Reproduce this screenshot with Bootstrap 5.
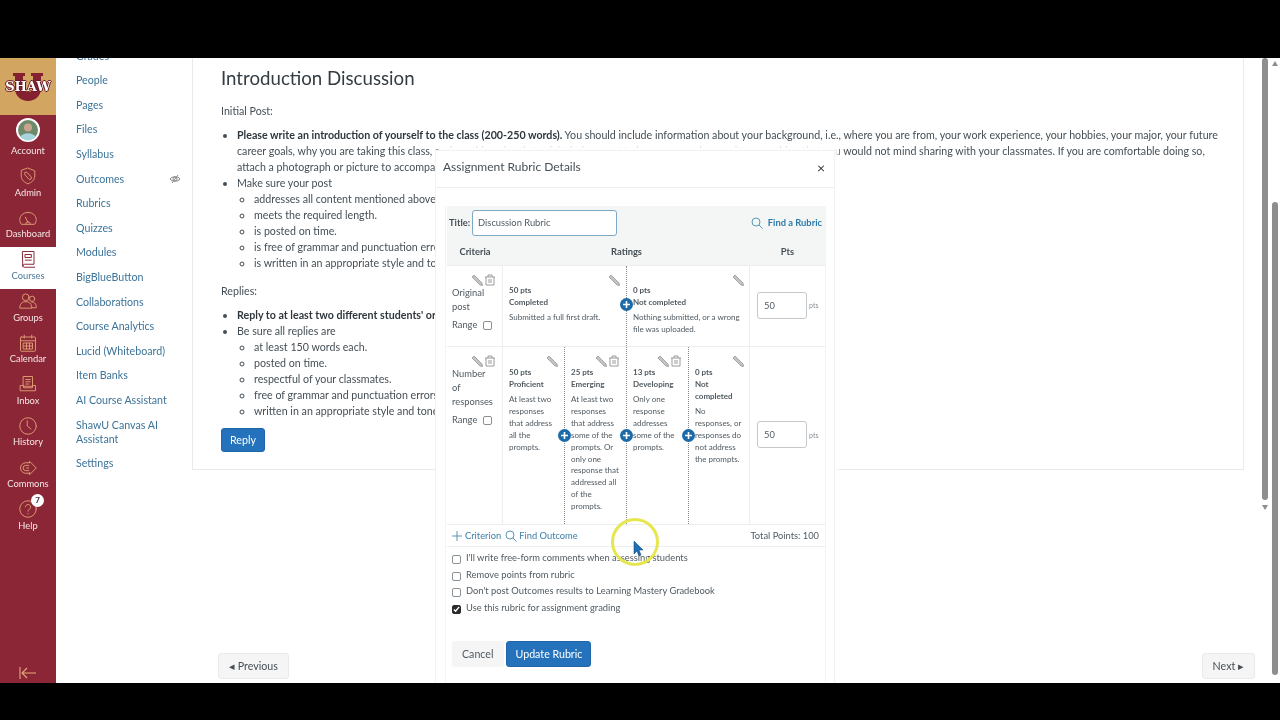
<!doctype html>
<html lang="en">
<head>
<meta charset="utf-8">
<title>Introduction Discussion</title>
<link rel="stylesheet" href="https://cdn.jsdelivr.net/npm/bootstrap@5.3.0/dist/css/bootstrap.min.css">
<style>
html,body{height:720px;overflow:hidden;background:#000}
body{font-family:Lato,"Liberation Sans",sans-serif;font-size:10.67px;line-height:16px;color:#454f56}
.blackbar-top{height:58px;background:#000}
.blackbar-bot{height:37px;background:#000}
.app{height:625px;background:#fff;overflow:hidden;position:relative;filter:blur(.3px)}
.gnav{width:56px;flex:none;background:#8a2635;color:#f4e6e6;overflow:hidden;position:relative}
.logo{height:57px;background:#d2a660;position:relative;overflow:hidden}
.logo svg{display:block;margin:15px auto 0}
.logo-word{position:absolute;left:0;right:0;top:21px;text-align:center;font:700 13px/16px "DejaVu Serif","Liberation Serif",serif;color:#fff;text-shadow:0 0 1px #6a1a28,1px 0 0 #6a1a28,-1px 0 0 #6a1a28,0 1px 0 #6a1a28,0 -1px 0 #6a1a28}
.gitem{height:41.65px;display:flex;flex-direction:column;align-items:center;justify-content:flex-start;padding-top:3.5px;font-size:9.33px;line-height:12px;position:relative}
.gitem svg{width:18px;height:18px;display:block;fill:none;stroke:#dc9a72;stroke-width:1.3;stroke-linejoin:round;stroke-linecap:round}
.gitem span.lbl{margin-top:1.5px}
.gitem.acct svg{width:24px;height:24px;margin:-7.5px 0 1px}
.gitem.active{background:#fff;color:#4a7a9a}
.gitem.active svg{stroke:#8a2635}
.gbadge{position:absolute;left:31px;top:-3px;width:13px;height:13px;border-radius:50%;background:#fff;color:#333;font-size:8px;font-weight:700;line-height:13px;text-align:center}
.gspacer{height:7px}
.collapse-arrow{position:absolute;left:18px;bottom:3px;width:20px;height:14px;fill:none;stroke:#e8a77c;stroke-width:1.1}
.cnav{width:136px;flex:none;padding-left:20px;overflow:hidden}
.cnav ul{list-style:none;margin:-9.4px 0 0;padding:0}
.cnav li{font-size:10.67px;line-height:14px;color:#3c7399;margin-bottom:10.6px;position:relative}
.cnav li svg{position:absolute;left:93px;top:1px;width:12px;height:12px;fill:none;stroke:#888;stroke-width:1}
.main{flex:1;position:relative;min-width:0}
.cbox{position:absolute;left:0;top:-2px;width:1052px;height:414px;border:1px solid #e8eaec;border-top:0;padding:0 20px 0 28px}
.dtitle{font-size:18.67px;line-height:22px;font-weight:400;color:#333c42;margin:11px 0 14px}
.cbox p{margin:0 0 8px}
.cbox ul{margin:0;padding-left:16px}
.cbox ul ul{padding-left:17px}
.cbox>ul{margin-bottom:12px}
.cbox ul ul li{list-style:circle}
.cbox strong{color:#2f373d;font-weight:700}
.reply-btn{background:#2372bb;border:1px solid #1f66a8;color:#fff;font-size:10.67px;line-height:16px;padding:3px 8px;border-radius:3px;margin-top:-3px}
.pager{position:absolute;left:26px;right:25px;bottom:4px;display:flex;justify-content:space-between}
.pg-btn{background:#f5f5f5;border:1px solid #e8eaec;color:#454f56;font-size:10.67px;line-height:16px;padding:4px 10px;border-radius:3px}
.sb{position:absolute;background:#8e8e8e;border-radius:3px}
.sb-in{left:1262px;top:0;width:6px;height:442px}
.sb-out{left:1272px;top:144px;width:6px;height:473px}
.sb-arrow{position:absolute;width:0;height:0;border-left:3.5px solid transparent;border-right:3.5px solid transparent}
.rmodal{position:absolute;left:435px;top:92px;width:400px;height:540px;background:#fff;border:1px solid #f1f2f3;box-shadow:3px -5px 4px 0 #fff}
.mhead{height:37px;border-bottom:1px solid #eceeef;display:flex;justify-content:space-between;padding:8px 9px 0 7px;font-size:12px;line-height:16px;color:#454f56}
.xclose{color:#333;font-size:14px;line-height:16px;padding-top:1px}
.mbody{margin:18px 8px 0 9px;height:489px;border:1px solid #f3f4f5;border-top:0}
.rb{margin:0 0 0 1px;font-size:8px;line-height:12px;color:#505a61;border-bottom:1px solid #eceeef}
.rtitle{background:#f4f5f5;height:41px;padding:4px 3px 0 2px;display:flex;align-items:flex-start;justify-content:space-between}
.rtitle label{font-size:9.33px;font-weight:700;line-height:26px;color:#454f56}
.tinput{width:145px;height:26px;margin-left:2px;border:1px solid #7fa8c4;border-radius:3px;background:#fff;font-size:9.33px;line-height:24px;padding-left:5px;display:inline-block;color:#505a61}
.frub{font-size:9.33px;font-weight:700;color:#2d7aa8;line-height:26px;display:flex;align-items:center;gap:5px}
.frub svg,.ficon{width:12px;height:12px;fill:none;stroke:#5a97ba;stroke-width:1}
.rgrid{display:grid;grid-template-columns:56px 247px 75px}
.rh{background:#f4f5f5;height:14px;margin:0;font-size:9.33px;font-weight:700;line-height:10px;text-align:center;color:#454f56;padding-bottom:4px;box-sizing:content-box}
.rc{border-top:1px solid #eceeef;border-right:1px solid #eceeef;position:relative}
.rc.last{border-right:0}
.crit{font-size:9.33px;line-height:14px;padding:20px 0 0 5px;color:#505a61}
.crit .rng{display:flex;align-items:center;gap:6px;margin-top:4px}
.box{display:inline-block;width:9px;height:9px;border:1px solid #8a8f93;border-radius:2px;background:#fff;flex:none}
.tools{position:absolute;right:6px;top:8px;display:flex;gap:1px}
.tools svg{width:12px;height:12px;stroke:#9a9a9a;stroke-width:1;fill:none}
.tools svg.pen{fill:#c4c4c4;stroke:#8c8c8c;stroke-width:.7}
.ratings{display:flex}
.rate{border-right:1px dotted #888;position:relative;padding:19px 7px 0 6px;flex:none}
.ratings.first .rate{padding-top:18px}
.rate:last-child{border-right:0}
.rate b{display:block;font-weight:700;color:#505a61}
.rate p{margin:4px 0 0;font-size:8px;line-height:11.9px}
.addp{position:absolute;right:-7px;width:13px;height:13px;z-index:2;display:block}
.ptsc{display:flex;align-items:center;padding:0 0 2px 7px;gap:2px;font-size:7px;color:#8a8f93}
.ptsin{width:50px;height:27px;border:1px solid #c4c8cb;border-radius:3px;font-size:9.33px;line-height:25px;padding-left:6px;color:#505a61}
.rfoot{margin-left:1px;height:22px;display:flex;align-items:center;justify-content:space-between;padding:0 6px 0 4px;font-size:9.33px;border-bottom:1px solid #eceeef;color:#505a61}
.rfoot .lk{color:#3c7fa8;display:inline-flex;align-items:center;gap:2px}
.opts{margin:3px 0 0 6px;font-size:9.33px;line-height:16.6px;color:#505a61}
.opt{display:flex;gap:5px}
.opt .box{margin-top:5px}
.opt .box.chk{background:#2b2b2b;border-color:#2b2b2b;position:relative}
.opt .box.chk svg{position:absolute;left:0;top:0;width:7px;height:7px;fill:none;stroke:#fff;stroke-width:1.6}
.mbtns{display:flex;gap:2px;margin:25px 0 0 6px}
.btn-cancel{background:#f5f5f5;color:#505a61;border:0;font-size:10.67px;line-height:16px;padding:5px 10px;border-radius:3px}
.btn-update{background:#2372bb;color:#fff;border:1px solid #1f66a8;font-size:10.67px;line-height:16px;padding:4px 8px 4px 9px;border-radius:3px}
.grip{position:absolute;right:0;bottom:-2px;width:8px;height:8px;fill:none;stroke:#777;stroke-width:.8}
.ring{position:absolute;left:611px;top:460px;width:48px;height:48px;border:3px solid #e6e650;border-radius:50%;z-index:5}
.cursor{position:absolute;left:633px;top:483px;width:11px;height:16px;z-index:6}
</style>
</head>
<body>
<div class="blackbar-top"></div>
<div class="app d-flex">
  <nav class="gnav">
    <div class="logo">
      <svg width="30" height="28" viewBox="0 0 30 28"><path d="M0 0h12v3h-2v11c0 3 2 5 5 5s5-2 5-5V3h-2V0h12v3h-2v12c0 8-6 13-13 13S2 23 2 15V3H0z" fill="#84202f"/></svg>
      <div class="logo-word">SHAW</div>
    </div>
    <div class="gspacer"></div>
    <div class="gitem acct"><svg viewBox="0 0 24 24"><circle cx="12" cy="12" r="11" fill="#6f8a6a" stroke="#fff" stroke-width="2"/><circle cx="12" cy="9.5" r="4" fill="#c9a58e" stroke="none"/><path d="M4.5 19c2-5 13-5 15 0-4 4.500-11 4.500-15 0z" fill="#a9d3df" stroke="none"/></svg><span class="lbl">Account</span></div>
    <div class="gitem"><svg viewBox="0 0 24 24"><path d="M12 1.500l9 3.500v7c0 5-4 8.500-9 10.500-5-2-9-5.500-9-10.500V5z"/><path d="M8 7.500a2 2 0 0 1 3 0l5 5.500a2 2 0 0 1-3 3L8 10.500a2 2 0 0 1 0-3z"/></svg><span class="lbl">Admin</span></div>
    <div class="gitem"><svg viewBox="0 0 24 24"><path d="M3 20c-1.500-2-2-4-2-6a11 9.500 0 0 1 22 0c0 2-.5 4-2 6z"/><path d="M12 18l-3.500-7M9 20a3 3 0 0 1 6 0"/></svg><span class="lbl">Dashboard</span></div>
    <div class="gitem active"><svg viewBox="0 0 24 24"><path d="M5 2h15v17H7.500A2.500 2.500 0 0 0 5 21.500zM5 21.500C5 22 6 23 7.500 23H21"/><rect x="8.500" y="6" width="8" height="4"/><path d="M8.500 13.500h8"/></svg><span class="lbl">Courses</span></div>
    <div class="gitem"><svg viewBox="0 0 24 24"><circle cx="9" cy="7" r="4.500"/><circle cx="17.500" cy="9" r="3.500"/><path d="M1 21c0-3 1-6 5-8h6c4 2 5 5 5 8zM17 13.500h2c3 1 4 4 4 7.500h-6"/></svg><span class="lbl">Groups</span></div>
    <div class="gitem"><svg viewBox="0 0 24 24"><rect x="2" y="4" width="20" height="19" rx="1"/><path d="M2 9h20M7 1.500v4M17 1.500v4M6 12h12v8H6zM10 12v8M14 12v8M6 16h12"/></svg><span class="lbl">Calendar</span></div>
    <div class="gitem"><svg viewBox="0 0 24 24"><path d="M6 2h12v13H6zM9 6h6M9 9h6M9 12h4M2 14h4v3h12v-3h4v7H2z"/></svg><span class="lbl">Inbox</span></div>
    <div class="gitem"><svg viewBox="0 0 24 24"><circle cx="12" cy="12" r="11"/><path d="M11 5v7l5 4"/></svg><span class="lbl">History</span></div>
    <div class="gitem"><svg viewBox="0 0 24 24"><path d="M13 5H9a7 7 0 0 0 0 14h4M13 8.500H9a3.500 3.500 0 0 0 0 7h4M13 12h-3M14 5V3l9 9-9 9v-3"/></svg><span class="lbl">Commons</span></div>
    <div class="gitem"><svg viewBox="0 0 24 24"><circle cx="12" cy="12" r="11"/><path d="M8.500 9a3.500 3.500 0 1 1 5 3.500c-1 .5-1.500 1-1.500 2.500M12 18v.5"/></svg><span class="lbl">Help</span><span class="gbadge">7</span></div>
    <svg class="collapse-arrow" viewBox="0 0 20 14"><path d="M2 1v12M18 7H4M9 2L4 7l5 5"/></svg>
  </nav>
  <aside class="cnav">
    <ul>
      <li>Grades</li><li>People</li><li>Pages</li><li>Files</li><li>Syllabus</li>
      <li>Outcomes<svg viewBox="0 0 12 12"><path d="M1 6c2-3 8-3 10 0-2 3-8 3-10 0z"/><circle cx="6" cy="6" r="2"/><path d="M3 10l6-8"/></svg></li>
      <li>Rubrics</li><li>Quizzes</li><li>Modules</li><li>BigBlueButton</li><li>Collaborations</li><li>Course Analytics</li><li>Lucid (Whiteboard)</li><li>Item Banks</li><li>AI Course Assistant</li><li>ShawU Canvas AI Assistant</li><li>Settings</li>
    </ul>
  </aside>
  <main class="main">
    <div class="cbox">
      <h1 class="dtitle">Introduction Discussion</h1>
      <p>Initial Post:</p>
      <ul>
        <li><strong>Please write an introduction of yourself to the class (200-250 words).</strong> You should include information about your background, i.e., where you are from, your work experience, your hobbies, your major, your future career goals, why you are taking this class, and anything else that might help us get to know you, as long as it's something that you would not mind sharing with your classmates. If you are comfortable doing so, attach a photograph or picture to accompany your post.</li>
        <li>Make sure your post
          <ul>
            <li>addresses all content mentioned above</li>
            <li>meets the required length.</li>
            <li>is posted on time.</li>
            <li>is free of grammar and punctuation errors.</li>
            <li>is written in an appropriate style and tone.</li>
          </ul>
        </li>
      </ul>
      <p>Replies:</p>
      <ul>
        <li><strong>Reply to at least two different students' original posts.</strong></li>
        <li>Be sure all replies are
          <ul>
            <li>at least 150 words each.</li>
            <li>posted on time.</li>
            <li>respectful of your classmates.</li>
            <li>free of grammar and punctuation errors.</li>
            <li>written in an appropriate style and tone.</li>
          </ul>
        </li>
      </ul>
      <button class="btn reply-btn">Reply</button>
    </div>
    <div class="pager">
      <button class="btn pg-btn">◂ Previous</button>
      <button class="btn pg-btn">Next ▸</button>
    </div>
  </main>
  <div class="sb sb-in"></div>
  <div class="sb-arrow" style="left:1261.5px;top:447px;border-top:5px solid #8e8e8e"></div>
  <div class="sb-arrow" style="left:1271.5px;top:3px;border-bottom:5px solid #8e8e8e"></div>
  <div class="sb sb-out"></div>

  <section class="rmodal">
    <div class="mhead"><span>Assignment Rubric Details</span><span class="xclose">×</span></div>
    <div class="mbody">
    <div class="rb">
      <div class="rtitle">
        <div class="d-flex"><label>Title:</label><span class="tinput">Discussion Rubric</span></div>
        <div class="frub"><svg viewBox="0 0 12 12"><circle cx="5" cy="5" r="4"/><path d="M8 8l3.500 3.500"/></svg>Find a Rubric</div>
      </div>
      <div class="rgrid">
        <div class="rh">Criteria</div><div class="rh">Ratings</div><div class="rh">Pts</div>

        <div class="rc crit" style="height:81px">
          <div class="tools"><svg class="pen" viewBox="0 0 12 12"><path d="M1 3l2-2 8 8 .5 2.500L9 11z"/></svg><svg viewBox="0 0 12 12"><path d="M1 3h10M4 3V1h4v2M2 3v8h8V3M5 5v4M7 5v4"/></svg></div>
          Original<br>post
          <div class="rng">Range <span class="box"></span></div>
        </div>
        <div class="rc ratings first">
          <div class="rate" style="width:124px"><div class="tools"><svg class="pen" viewBox="0 0 12 12"><path d="M1 3l2-2 8 8 .5 2.500L9 11z"/></svg></div><b>50 pts</b><b>Completed</b><p>Submitted a full first draft.</p><svg class="addp" style="top:32px" viewBox="0 0 13 13"><circle cx="6.500" cy="6.500" r="6.500" fill="#1c6aa8"/><path d="M6.500 3v7M3 6.500h7" stroke="#fff" stroke-width="1.600"/></svg></div>
          <div class="rate" style="width:123px"><div class="tools"><svg class="pen" viewBox="0 0 12 12"><path d="M1 3l2-2 8 8 .5 2.500L9 11z"/></svg></div><b>0 pts</b><b>Not completed</b><p>Nothing submitted, or a wrong file was uploaded.</p></div>
        </div>
        <div class="rc last ptsc"><span class="ptsin">50</span>pts</div>

        <div class="rc crit" style="height:178px">
          <div class="tools"><svg class="pen" viewBox="0 0 12 12"><path d="M1 3l2-2 8 8 .5 2.500L9 11z"/></svg><svg viewBox="0 0 12 12"><path d="M1 3h10M4 3V1h4v2M2 3v8h8V3M5 5v4M7 5v4"/></svg></div>
          Number<br>of<br>responses
          <div class="rng">Range <span class="box"></span></div>
        </div>
        <div class="rc ratings">
          <div class="rate" style="width:62px"><div class="tools"><svg class="pen" viewBox="0 0 12 12"><path d="M1 3l2-2 8 8 .5 2.500L9 11z"/></svg></div><b>50 pts</b><b>Proficient</b><p>At least two responses that address all the prompts.</p><svg class="addp" style="top:82px" viewBox="0 0 13 13"><circle cx="6.500" cy="6.500" r="6.500" fill="#1c6aa8"/><path d="M6.500 3v7M3 6.500h7" stroke="#fff" stroke-width="1.600"/></svg></div>
          <div class="rate" style="width:62px"><div class="tools"><svg class="pen" viewBox="0 0 12 12"><path d="M1 3l2-2 8 8 .5 2.500L9 11z"/></svg><svg viewBox="0 0 12 12"><path d="M1 3h10M4 3V1h4v2M2 3v8h8V3M5 5v4M7 5v4"/></svg></div><b>25 pts</b><b>Emerging</b><p>At least two responses that address some of the prompts. Or only one response that addressed all of the prompts.</p><svg class="addp" style="top:82px" viewBox="0 0 13 13"><circle cx="6.500" cy="6.500" r="6.500" fill="#1c6aa8"/><path d="M6.500 3v7M3 6.500h7" stroke="#fff" stroke-width="1.600"/></svg></div>
          <div class="rate" style="width:62px"><div class="tools"><svg class="pen" viewBox="0 0 12 12"><path d="M1 3l2-2 8 8 .5 2.500L9 11z"/></svg><svg viewBox="0 0 12 12"><path d="M1 3h10M4 3V1h4v2M2 3v8h8V3M5 5v4M7 5v4"/></svg></div><b>13 pts</b><b>Developing</b><p>Only one response addresses some of the prompts.</p><svg class="addp" style="top:82px" viewBox="0 0 13 13"><circle cx="6.500" cy="6.500" r="6.500" fill="#1c6aa8"/><path d="M6.500 3v7M3 6.500h7" stroke="#fff" stroke-width="1.600"/></svg></div>
          <div class="rate" style="width:61px"><div class="tools"><svg class="pen" viewBox="0 0 12 12"><path d="M1 3l2-2 8 8 .5 2.500L9 11z"/></svg></div><b>0 pts</b><b>Not completed</b><p>No responses, or responses do not address the prompts.</p></div>
        </div>
        <div class="rc last ptsc"><span class="ptsin">50</span>pts</div>
      </div>
    </div>
    <div class="rfoot">
      <div class="d-flex gap-1"><span class="lk"><svg class="ficon" viewBox="0 0 12 12"><path d="M6 1v10M1 6h10"/></svg>Criterion</span><span class="lk"><svg class="ficon" viewBox="0 0 12 12"><circle cx="5" cy="5" r="4"/><path d="M8 8l3.500 3.500"/></svg>Find Outcome</span></div>
      <div>Total Points: 100</div>
    </div>
    <div class="opts">
      <div class="opt"><span class="box"></span>I'll write free-form comments when assessing students</div>
      <div class="opt"><span class="box"></span>Remove points from rubric</div>
      <div class="opt"><span class="box"></span>Don't post Outcomes results to Learning Mastery Gradebook</div>
      <div class="opt"><span class="box chk"><svg viewBox="0 0 8 8"><path d="M1 4l2 2 4-5"/></svg></span>Use this rubric for assignment grading</div>
    </div>
    <div class="mbtns"><button class="btn btn-cancel">Cancel</button><button class="btn btn-update">Update Rubric</button></div>
    </div>
    <svg class="grip" viewBox="0 0 8 8"><path d="M1 7l6-6M4 7l3-3"/></svg>
  </section>

  <div class="ring"></div>
  <svg class="cursor" viewBox="0 0 11 16"><path d="M1 0v13l3-3 2 5 2-1-2-5h4z" fill="#1d6fb8" stroke="#0d3d66" stroke-width=".5"/></svg>
</div>
<div class="blackbar-bot"></div>
<script src="https://cdn.jsdelivr.net/npm/bootstrap@5.3.0/dist/js/bootstrap.bundle.min.js"></script>
</body>
</html>
